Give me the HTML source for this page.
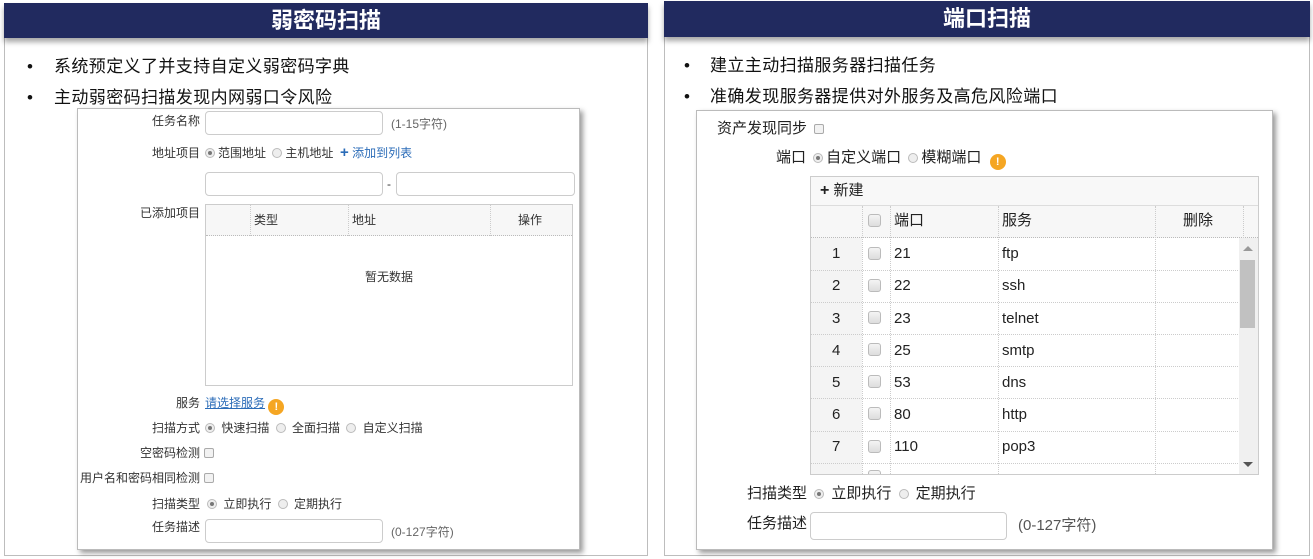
<!DOCTYPE html>
<html><head><meta charset="utf-8">
<style>
*{margin:0;padding:0;box-sizing:border-box}
body{width:1313px;height:559px;background:#fff;position:relative;overflow:hidden;font-family:"Liberation Sans","Noto Sans CJK SC",sans-serif;color:#222}
.a{position:absolute;white-space:nowrap}
.panel{position:absolute;border:1px solid #bdbdbd;border-top:none;background:#fff}
.hd{position:absolute;background:#212a5f;color:#fff;font-weight:bold;font-size:22px;text-align:center;line-height:35px;box-shadow:0 4px 5px rgba(0,0,0,.35)}
.bul{font-size:17px;line-height:20px;color:#111;letter-spacing:0.4px}
.box{position:absolute;background:#fff;border:1px solid #bbb;box-shadow:3px 3px 5px rgba(0,0,0,.4)}
.l{font-size:12px;line-height:16px;color:#333}
.r{font-size:14px;line-height:18px;color:#222}
.r15{font-size:15px;line-height:18px;color:#222}
.inp{position:absolute;border:1px solid #ccc;border-radius:4px;background:#fff}
.rad{display:inline-block;width:10px;height:10px;border:1px solid #bbb;border-radius:50%;background:#eee;vertical-align:-1px;position:relative;margin:0 3px}
.rad.on::after{content:"";position:absolute;left:2px;top:2px;width:4px;height:4px;border-radius:50%;background:#777}
.cb{display:inline-block;width:10px;height:10px;border:1px solid #aaa;border-radius:2px;background:#f2f2f2;vertical-align:-1px;margin-left:3px}
.cb2{position:absolute;width:13px;height:13px;border:1px solid #bbb;border-radius:3px;background:linear-gradient(#f4f4f4,#ddd)}
.warn{display:inline-block;width:16px;height:16px;border-radius:50%;background:#f5a623;color:#fff;font-size:11px;font-weight:bold;text-align:center;line-height:16px;vertical-align:-3px}
.hl{position:absolute;height:0;border-top:1px dotted #ccc}
.vl{position:absolute;width:0;border-left:1px dotted #ccc}
</style></head><body>

<!-- LEFT -->
<div class="panel" style="left:4px;top:3px;width:644px;height:553px"></div>
<div class="hd" style="left:4px;top:3px;width:644px;height:35px">弱密码扫描</div>
<div class="a bul" style="left:27px;top:57px">•</div>
<div class="a bul" style="left:54px;top:57px">系统预定义了并支持自定义弱密码字典</div>
<div class="a bul" style="left:27px;top:88px">•</div>
<div class="a bul" style="left:54px;top:88px">主动弱密码扫描发现内网弱口令风险</div>

<div class="box" style="left:77px;top:108px;width:503px;height:442px"></div>
<div class="a l" style="right:1113px;top:113px">任务名称</div>
<div class="inp" style="left:205px;top:111px;width:178px;height:24px"></div>
<div class="a l" style="left:391px;top:116px;color:#666">(1-15字符)</div>
<div class="a l" style="right:1113px;top:145px">地址项目</div>
<div class="a l" style="left:202px;top:145px"><span class="rad on"></span>范围地址 <span class="rad"></span>主机地址 &nbsp;<b style="color:#2b6cb8;font-size:15px">+</b> <span style="color:#2b6cb8">添加到列表</span></div>
<div class="inp" style="left:205px;top:172px;width:178px;height:24px"></div>
<div class="a l" style="left:387px;top:176px">-</div>
<div class="inp" style="left:396px;top:172px;width:179px;height:24px"></div>
<div class="a l" style="right:1113px;top:205px">已添加项目</div>
<div class="a" style="left:205px;top:204px;width:368px;height:182px;border:1px solid #ccc"></div>
<div class="a" style="left:206px;top:205px;width:366px;height:31px;background:#f7f7f7;border-bottom:1px dotted #bbb"></div>
<div class="vl" style="left:250px;top:205px;height:31px"></div>
<div class="vl" style="left:348px;top:205px;height:31px"></div>
<div class="vl" style="left:490px;top:205px;height:31px"></div>
<div class="a l" style="left:254px;top:212px">类型</div>
<div class="a l" style="left:352px;top:212px">地址</div>
<div class="a l" style="left:518px;top:212px">操作</div>
<div class="a l" style="left:365px;top:269px">暂无数据</div>
<div class="a l" style="right:1113px;top:395px">服务</div>
<div class="a l" style="left:205px;top:395px"><span style="color:#2b6cb8;text-decoration:underline">请选择服务</span> <span class="warn">!</span></div>
<div class="a l" style="right:1113px;top:420px">扫描方式</div>
<div class="a l" style="left:202px;top:420px"><span class="rad on"></span> 快速扫描 <span class="rad"></span> 全面扫描 <span class="rad"></span> 自定义扫描</div>
<div class="a l" style="right:1113px;top:445px">空密码检测</div>
<div class="a l" style="left:201px;top:445px"><span class="cb"></span></div>
<div class="a l" style="right:1113px;top:470px">用户名和密码相同检测</div>
<div class="a l" style="left:201px;top:470px"><span class="cb"></span></div>
<div class="a l" style="right:1113px;top:496px">扫描类型</div>
<div class="a l" style="left:204px;top:496px"><span class="rad on"></span> 立即执行 <span class="rad"></span> 定期执行</div>
<div class="a l" style="right:1113px;top:519px">任务描述</div>
<div class="inp" style="left:205px;top:519px;width:178px;height:24px"></div>
<div class="a l" style="left:391px;top:524px;color:#666">(0-127字符)</div>

<!-- RIGHT -->
<div class="panel" style="left:664px;top:1px;width:646px;height:555px"></div>
<div class="hd" style="left:664px;top:1px;width:646px;height:36px">端口扫描</div>
<div class="a bul" style="left:684px;top:56px">•</div>
<div class="a bul" style="left:710px;top:56px">建立主动扫描服务器扫描任务</div>
<div class="a bul" style="left:684px;top:87px">•</div>
<div class="a bul" style="left:710px;top:87px">准确发现服务器提供对外服务及高危风险端口</div>

<div class="box" style="left:696px;top:110px;width:577px;height:440px"></div>
<div class="a r15" style="left:717px;top:120px">资产发现同步 <span class="cb"></span></div>
<div class="a r15" style="left:776px;top:149px">端口 <span class="rad on"></span>自定义端口 <span class="rad"></span>模糊端口 &nbsp;<span class="warn">!</span></div>

<div class="a" style="left:810px;top:176px;width:449px;height:299px;border:1px solid #ccc;overflow:hidden">
 <div class="a" style="left:0;top:0;width:447px;height:29px;background:#f8f8f8;border-bottom:1px solid #ddd"></div>
 <div class="a r15" style="left:9px;top:5px"><b style="font-size:16px">+</b> 新建</div>
 <div class="a" style="left:0;top:29px;width:447px;height:32px;background:#f7f7f7;border-bottom:1px dotted #bbb"></div>
 <div class="a" style="left:0;top:61px;width:51px;height:240px;background:#f4f4f4"></div>
 <div class="cb2" style="left:57px;top:293px"></div>
</div>
<div class="vl" style="left:862px;top:206px;height:268px"></div>
<div class="vl" style="left:890px;top:206px;height:268px"></div>
<div class="vl" style="left:998px;top:206px;height:268px"></div>
<div class="vl" style="left:1155px;top:206px;height:268px"></div>
<div class="vl" style="left:1243px;top:206px;height:32px"></div>
<div class="cb2" style="left:868px;top:214px"></div>
<div class="a r15" style="left:894px;top:212px">端口</div>
<div class="a r15" style="left:1002px;top:212px">服务</div>
<div class="a r15" style="left:1183px;top:212px">删除</div>
<!-- rows -->
<div class="hl" style="left:811px;top:270px;width:429px"></div>
<div class="hl" style="left:811px;top:302px;width:429px"></div>
<div class="hl" style="left:811px;top:334px;width:429px"></div>
<div class="hl" style="left:811px;top:366px;width:429px"></div>
<div class="hl" style="left:811px;top:398px;width:429px"></div>
<div class="hl" style="left:811px;top:431px;width:429px"></div>
<div class="hl" style="left:811px;top:463px;width:429px"></div>

<div class="a r15" style="left:832px;top:245px">1</div><div class="cb2" style="left:868px;top:247px"></div><div class="a r15" style="left:894px;top:245px">21</div><div class="a r15" style="left:1002px;top:245px">ftp</div>
<div class="a r15" style="left:832px;top:277px">2</div><div class="cb2" style="left:868px;top:279px"></div><div class="a r15" style="left:894px;top:277px">22</div><div class="a r15" style="left:1002px;top:277px">ssh</div>
<div class="a r15" style="left:832px;top:310px">3</div><div class="cb2" style="left:868px;top:311px"></div><div class="a r15" style="left:894px;top:310px">23</div><div class="a r15" style="left:1002px;top:310px">telnet</div>
<div class="a r15" style="left:832px;top:342px">4</div><div class="cb2" style="left:868px;top:343px"></div><div class="a r15" style="left:894px;top:342px">25</div><div class="a r15" style="left:1002px;top:342px">smtp</div>
<div class="a r15" style="left:832px;top:374px">5</div><div class="cb2" style="left:868px;top:375px"></div><div class="a r15" style="left:894px;top:374px">53</div><div class="a r15" style="left:1002px;top:374px">dns</div>
<div class="a r15" style="left:832px;top:406px">6</div><div class="cb2" style="left:868px;top:407px"></div><div class="a r15" style="left:894px;top:406px">80</div><div class="a r15" style="left:1002px;top:406px">http</div>
<div class="a r15" style="left:832px;top:438px">7</div><div class="cb2" style="left:868px;top:440px"></div><div class="a r15" style="left:894px;top:438px">110</div><div class="a r15" style="left:1002px;top:438px">pop3</div>
<!-- scrollbar -->
<div class="a" style="left:1239px;top:238px;width:19px;height:236px;background:#f0f0f0"></div>
<div class="a" style="left:1243px;top:246px;width:0;height:0;border-left:5px solid transparent;border-right:5px solid transparent;border-bottom:5px solid #999"></div>
<div class="a" style="left:1240px;top:260px;width:15px;height:68px;background:#c1c1c1"></div>
<div class="a" style="left:1243px;top:462px;width:0;height:0;border-left:5px solid transparent;border-right:5px solid transparent;border-top:5px solid #555"></div>

<div class="a r15" style="left:747px;top:485px">扫描类型 <span class="rad on"></span> 立即执行 <span class="rad"></span> 定期执行</div>
<div class="a r15" style="left:747px;top:515px">任务描述</div>
<div class="inp" style="left:810px;top:512px;width:197px;height:28px"></div>
<div class="a r15" style="left:1018px;top:517px;color:#555">(0-127字符)</div>
</body></html>
